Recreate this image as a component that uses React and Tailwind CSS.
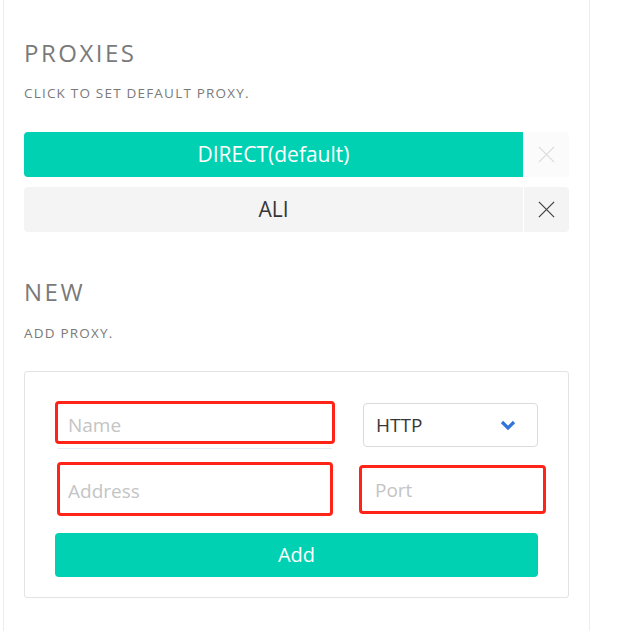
import React, { useState } from "react";

const font = { fontFamily: '"Open Sans", "Noto Sans", sans-serif' };

function XIcon({ className }) {
  return (
    <svg viewBox="0 0 20 20" className={className} fill="none" stroke="currentColor" strokeWidth="1.3">
      <path d="M2 2 L18 18 M18 2 L2 18" />
    </svg>
  );
}

function ProxyRow({ name, active, onPick }) {
  return (
    <div className="flex h-[45px] rounded-[4px] overflow-hidden">
      <button
        onClick={onPick}
        className={`flex-1 flex items-center justify-center text-[21px] ${
          active ? "bg-[#00d1b2] text-white" : "bg-[#f4f4f4] text-[#363636]"
        }`}
      >
        {name}
      </button>
      <button
        className={`w-[46px] flex items-center justify-center ${
          active ? "bg-[#fbfbfb] text-[#dcdcdc]" : "bg-[#f4f4f4] text-[#444] border-l border-white"
        }`}
      >
        <XIcon className="w-[19px] h-[19px]" />
      </button>
    </div>
  );
}

export default function App() {
  const [current, setCurrent] = useState("DIRECT");
  const proxies = ["DIRECT", "ALI"];

  return (
    <div className="w-[623px] h-[631px] bg-white overflow-hidden" style={font}>
      <div className="ml-[3px] w-[587px] h-full border-l border-r border-[#ededed] pl-[20px] pr-[20px]">
        <h1 className="pt-[37px] text-[24px] leading-[32px] tracking-[2.5px] text-[#7a7a7a]">PROXIES</h1>
        <p className="mt-[15px] text-[13.5px] leading-[18px] tracking-[1.2px] text-[#7a7a7a]">CLICK TO SET DEFAULT PROXY.</p>

        <div className="mt-[30px] flex flex-col gap-[10px]">
          {proxies.map((p) => (
            <ProxyRow
              key={p}
              name={p === "DIRECT" ? "DIRECT(default)" : p}
              active={current === p}
              onPick={() => setCurrent(p)}
            />
          ))}
        </div>

        <h1 className="mt-[44px] text-[24px] leading-[32px] tracking-[2.5px] text-[#7a7a7a]">NEW</h1>
        <p className="mt-[16px] text-[13.5px] leading-[18px] tracking-[1.2px] text-[#7a7a7a]">ADD PROXY.</p>

        <div className="mt-[29px] border border-[#e3e3e3] rounded-[3px] pt-[29px] pb-[20px] pl-[30px] pr-[30px]">
          <div className="flex items-start gap-[28px]">
            <div className="shrink-0 w-[280px] flex flex-col">
              <div className="h-[43px] border-[3px] border-[#ff2418] rounded-[4px] flex items-center pl-[10px] pr-[10px] pt-[5px]">
                <input placeholder="Name" className="w-full outline-none text-[19px] text-[#363636] placeholder:text-[#c4c4c4]" />
              </div>
              <div className="mt-[4px] mx-[3px] h-px bg-[#e6ecf8]"></div>
            </div>
            <div className="shrink-0 mt-[2px] w-[175px] h-[44px] border border-[#dbdbdb] rounded-[4px] flex items-center justify-between pl-[12px] pr-[20px]">
              <span className="text-[19px] text-[#363636]">HTTP</span>
              <svg viewBox="0 0 18 18" className="w-[18px] h-[18px]" fill="none" stroke="#3273dc" strokeWidth="3.2">
                <path d="M3 6 L9 12 L15 6" />
              </svg>
            </div>
          </div>
          <div className="mt-[13px] flex items-start gap-[26px]">
            <div className="shrink-0 ml-[2px] w-[276px] h-[54px] border-[3px] border-[#ff2418] rounded-[4px] flex items-center pl-[8px] pr-[8px] pt-[4px]">
              <input placeholder="Address" className="w-full outline-none text-[19px] text-[#363636] placeholder:text-[#c4c4c4]" />
            </div>
            <div className="shrink-0 mt-[3px] w-[187px] h-[49px] border-[3px] border-[#ff2418] rounded-[4px] flex items-center pl-[13px] pr-[13px] pt-[2px]">
              <input placeholder="Port" className="w-full outline-none text-[19px] text-[#363636] placeholder:text-[#c4c4c4]" />
            </div>
          </div>
          <button className="mt-[17px] w-[483px] h-[44px] rounded-[4px] bg-[#00d1b2] text-white text-[20px]">Add</button>
        </div>
      </div>
    </div>
  );
}
